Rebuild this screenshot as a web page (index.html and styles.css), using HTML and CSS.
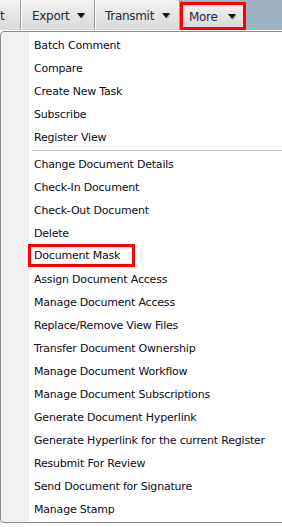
FILE: index.html
```html
<!DOCTYPE html>
<html lang="en">
<head>
  <meta charset="UTF-8">
  <meta name="viewport" content="width=device-width, initial-scale=1">
  <title>More menu</title>
  <link rel="stylesheet" href="styles.css">
</head>
<body>

  <div class="toolbar">
    <div class="tb-btn tb-first">t</div>
    <div class="tb-btn tb-export">Export <span class="caret"></span></div>
    <div class="tb-btn tb-transmit">Transmit <span class="caret"></span></div>
    <div class="tb-btn tb-more">More <span class="caret"></span></div>
    <div class="tb-fill"></div>
  </div>

  <ul class="menu">
    <li>Batch Comment</li>
    <li>Compare</li>
    <li>Create New Task</li>
    <li>Subscribe</li>
    <li>Register View</li>
    <li class="sep"></li>
    <li>Change Document Details</li>
    <li>Check-In Document</li>
    <li>Check-Out Document</li>
    <li>Delete</li>
    <li><span class="mark">Document Mask</span></li>
    <li>Assign Document Access</li>
    <li>Manage Document Access</li>
    <li>Replace/Remove View Files</li>
    <li>Transfer Document Ownership</li>
    <li>Manage Document Workflow</li>
    <li>Manage Document Subscriptions</li>
    <li>Generate Document Hyperlink</li>
    <li>Generate Hyperlink for the current Register</li>
    <li>Resubmit For Review</li>
    <li>Send Document for Signature</li>
    <li>Manage Stamp</li>
  </ul>

</body>
</html>
```

FILE: styles.css
```css
* {
  box-sizing: border-box;
}

body {
  font-family: "DejaVu Sans", Tahoma, sans-serif;
  font-size: 11px;
  letter-spacing: -0.2px;
  margin: 0;
  padding: 0;
  background: #fff;
  overflow: hidden;
}

.toolbar {
  display: flex;
  height: 30px;
  background: #9fb2c2;
}

.tb-btn {
  display: flex;
  align-items: center;
  height: 30px;
  padding-top: 1px;
  color: #2a2a3a;
  font-size: 12px;
  letter-spacing: -0.3px;
  background: linear-gradient(#f2f2f2, #d9d9d9);
  border-left: 1px solid #fbfbfb;
  border-right: 1px solid #9a9a9a;
}

.tb-first {
  width: 21px;
  border-left: none;
  padding-left: 0;
}

.tb-export {
  width: 74px;
  padding-left: 10px;
}

.tb-transmit {
  width: 85px;
  padding-left: 9px;
}

.tb-more {
  width: 66px;
  padding-left: 6px;
  border: 3px solid #f00;
  height: 28px;
  margin-top: 2px;
}

.tb-fill {
  flex: 1;
}

.caret {
  width: 0;
  height: 0;
  margin-left: auto;
  margin-right: 9px;
  border-left: 4px solid transparent;
  border-right: 4px solid transparent;
  border-top: 5px solid #111;
  filter: drop-shadow(1px 1px 0 rgba(0, 0, 0, 0.25));
}

.tb-more .caret {
  margin-right: 7px;
}

.menu {
  list-style: none;
  margin: 1px 0 0 0;
  padding: 2px 0 1px 0;
  width: 310px;
  border: 1px solid #8c8c8c;
  border-radius: 4px;
  background: linear-gradient(to right, #f1f1f1 28px, #fff 28px);
  box-shadow: 1px 3px 3px rgba(0, 0, 0, 0.35);
}

.menu li {
  height: 23px;
  line-height: 23px;
  padding-left: 33px;
  color: #0c0c20;
  white-space: nowrap;
}

.menu li.sep {
  padding: 0;
  margin-left: 31px;
  margin-top: 1px;
  height: 3px;
  border-top: 1px solid #c8c8c8;
}

.mark {
  display: inline-block;
  margin-left: -6px;
  margin-top: -1px;
  padding: 0 12px 0 3px;
  line-height: 17px;
  border: 3px solid #f00;
  vertical-align: top;
}
```
